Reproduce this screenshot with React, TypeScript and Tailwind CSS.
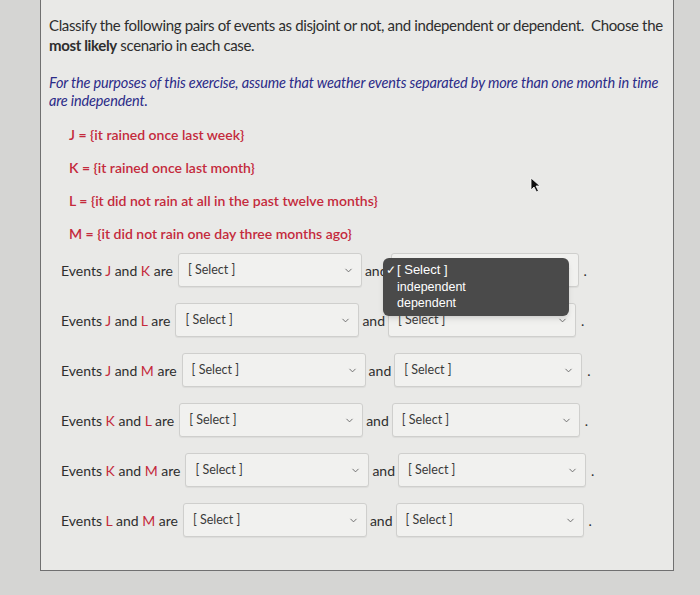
import { ChevronDown } from "lucide-react";

const rows = [
  ["J", "K"],
  ["J", "L"],
  ["J", "M"],
  ["K", "L"],
  ["K", "M"],
  ["L", "M"],
];

const defs = [
  ["J", "{it rained once last week}"],
  ["K", "{it rained once last month}"],
  ["L", "{it did not rain at all in the past twelve months}"],
  ["M", "{it did not rain one day three months ago}"],
];

function Select({ width }: { width: string }) {
  return (
    <div
      className={`${width} flex h-[34px] items-center justify-between rounded-[3px] border border-[#cfcfcd] bg-[#f1f1ef] pl-[9px] pr-[7px] shadow-[0_1px_1px_rgba(0,0,0,0.06)]`}
    >
      <span className="text-[12.5px] text-[#3a3a3a]">[ Select ]</span>
      <ChevronDown className="h-[11px] w-[11px] text-[#666]" strokeWidth={2} />
    </div>
  );
}

function Cursor() {
  return (
    <svg width="12" height="16" viewBox="0 0 12 16" className="absolute left-[530px] top-[177px]">
      <path d="M1 1 L1 13 L4 10 L6.5 15 L8.5 14 L6 9 L10 9 Z" fill="#111" stroke="#fff" strokeWidth="0.8" />
    </svg>
  );
}

export default function App() {
  return (
    <div className="relative h-[595px] w-[700px] overflow-hidden bg-[#d5d5d3] font-['Lato',sans-serif]">
      <div className="ml-[40px] h-[571px] w-[634px] border-x border-b border-[#707070] bg-[#e9e9e7] pl-[8px] pt-[15px]">
        <p className="text-[15px] leading-[20px] tracking-[-0.36px] text-[#2e2e2e]">
          <span className="whitespace-nowrap">
            Classify the following pairs of events as disjoint or not, and independent or dependent.&nbsp; Choose the
          </span>
          <br />
          <b>most likely</b> scenario in each case.
        </p>
        <p className="mt-[19px] pr-[12px] text-[14.5px] italic leading-[18px] tracking-[-0.15px] text-[#2b2b88]">
          For the purposes of this exercise, assume that weather events separated by more than one month in time are
          independent.
        </p>
        <div className="mt-[8px] pl-[20px]">
          {defs.map(([k, v]) => (
            <div key={k} className="text-[14px] font-semibold leading-[33px] text-[#c42a3c]">
              {k} = {v}
            </div>
          ))}
        </div>
        <div className="mt-[-5px] pl-[12px]">
          {rows.map(([a, b], i) => (
            <div key={i} className="flex h-[50px] items-center text-[14px] text-[#2e2e2e]">
              <span>
                Events <span className="text-[#c42a3c]">{a}</span> and <span className="text-[#c42a3c]">{b}</span> are
              </span>
              <div className="ml-[5px]">
                <Select width="w-[184px]" />
              </div>
              <span className="mx-[3px]">and</span>
              <Select width="w-[188px]" />
              <span className="ml-[5px]">.</span>
            </div>
          ))}
        </div>
      </div>

      <div className="absolute left-[383px] top-[258px] w-[186px] rounded-[6px] bg-[#4a4a4a] py-[4px] font-['Liberation_Sans',sans-serif] text-[12.5px] leading-[16.5px] text-white shadow-md">
        <div className="flex items-center">
          <span className="w-[14px] pl-[3px] text-[12px]">✓</span>
          <span className="text-[13px]">[ Select ]</span>
        </div>
        <div className="pl-[14px]">independent</div>
        <div className="pl-[14px]">dependent</div>
      </div>
      <Cursor />
    </div>
  );
}
